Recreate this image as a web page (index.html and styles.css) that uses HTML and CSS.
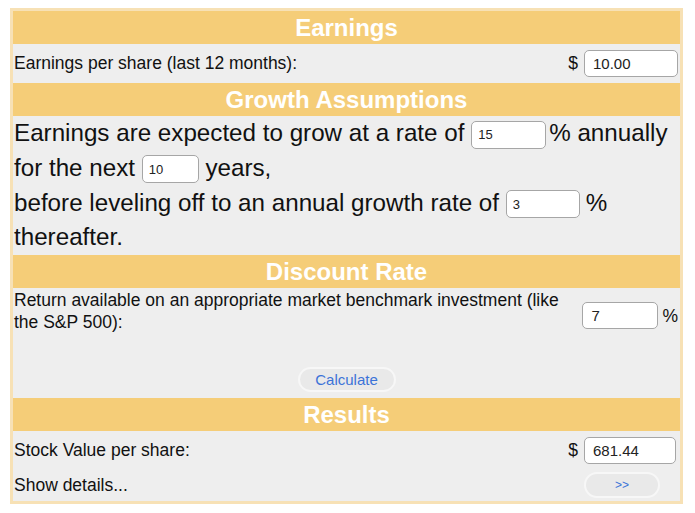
FILE: index.html
```html
<!DOCTYPE html>
<html>
<head>
<meta charset="utf-8">
<title>Stock Value Calculator</title>
<link rel="stylesheet" href="styles.css">
</head>
<body>
<div class="calc">
  <div class="head">Earnings</div>
  <div class="row row-eps">
    <div class="label">Earnings per share (last 12 months):</div>
    <span class="sym">$</span>
    <input class="field field-eps" type="text" value="10.00">
  </div>

  <div class="head">Growth Assumptions</div>
  <div class="growth">
    Earnings are expected to grow at a rate of <input class="small small-rate" type="text" value="15"><span class="after">% annually</span><br>
    for the next <input class="small small-years" type="text" value="10"> years,<br>
    before leveling off to an annual growth rate of <input class="small small-term" type="text" value="3"><span class="after2">%</span><br>
    thereafter.
  </div>

  <div class="head">Discount Rate</div>
  <div class="discount">
    <div class="row-disc">
      <div class="label label-disc">Return available on an appropriate market benchmark investment (like the S&amp;P 500):</div>
      <input class="field field-disc" type="text" value="7">
      <span class="pct">%</span>
    </div>
    <div class="calc-wrap"><button class="btn btn-calc" type="button">Calculate</button></div>
  </div>

  <div class="head">Results</div>
  <div class="row row-stock">
    <div class="label">Stock Value per share:</div>
    <span class="sym">$</span>
    <input class="field field-stock" type="text" value="681.44">
  </div>
  <div class="row row-details">
    <div class="label">Show details...</div>
    <button class="btn btn-more" type="button">&gt;&gt;</button>
  </div>
</div>
</body>
</html>
```

FILE: styles.css
```css
html, body {
  margin: 0;
  padding: 0;
  background: #ffffff;
}

body {
  font-family: "Liberation Sans", Arial, Helvetica, sans-serif;
  color: #111111;
}

.calc {
  box-sizing: border-box;
  width: 673px;
  margin: 8px 0 0 10px;
  border: 3px solid #f7e1b5;
  background: #eeeeee;
}

.head {
  height: 33px;
  line-height: 33px;
  background: #f5cd78;
  color: #ffffff;
  font-weight: bold;
  font-size: 24px;
  text-align: center;
}

.row {
  display: flex;
  align-items: center;
  padding-left: 1px;
}

.label {
  flex: 1;
  font-size: 17.5px;
}

.row-eps {
  height: 39px;
}

.sym {
  font-size: 17.5px;
  margin-right: 6px;
}

.field {
  box-sizing: border-box;
  height: 27px;
  border: 1px solid #a6a6a6;
  border-radius: 5px;
  background: #ffffff;
  font-family: "Liberation Sans", Arial, sans-serif;
  font-size: 15px;
  color: #222222;
  padding: 0 8px;
  outline: none;
}

.field-eps {
  width: 94px;
  margin-right: 2px;
}

.growth {
  font-size: 24.2px;
  line-height: 34.75px;
  padding-left: 1px;
}

.small {
  box-sizing: border-box;
  height: 28px;
  border: 1px solid #a6a6a6;
  border-radius: 5px;
  background: #ffffff;
  font-family: "Liberation Sans", Arial, sans-serif;
  font-size: 13px;
  color: #222222;
  padding: 0 6px;
  vertical-align: middle;
  outline: none;
}

.small-rate {
  width: 75px;
}

.small-years {
  width: 57px;
}

.small-term {
  width: 74px;
}

.after {
  margin-left: 3px;
}

.after2 {
  margin-left: 6px;
}

.discount {
  padding-bottom: 6px;
}

.row-disc {
  display: flex;
  align-items: flex-start;
  padding-left: 1px;
  height: 44px;
}

.label-disc {
  flex: 0 0 556px;
  line-height: 22px;
  margin-top: 1px;
}

.field-disc {
  width: 76px;
  margin-left: auto;
  margin-top: 14px;
}

.pct {
  font-size: 17.5px;
  margin: 18px 2px 0 4px;
}

.calc-wrap {
  text-align: center;
  margin-top: 35px;
}

.btn {
  font-family: "Liberation Sans", Arial, sans-serif;
  color: #3c73d8;
  background: #e9e9e9;
  border: 2px solid #f7f7f7;
  border-radius: 14px;
  cursor: pointer;
}

.btn-calc {
  width: 98px;
  height: 25px;
  font-size: 15px;
  padding: 0;
}

.row-stock {
  height: 38px;
}

.field-stock {
  width: 92px;
  margin-right: 4px;
}

.row-details {
  height: 32px;
}

.btn-more {
  width: 76px;
  height: 26px;
  font-size: 12px;
  padding: 0;
  margin-right: 20px;
}
```
